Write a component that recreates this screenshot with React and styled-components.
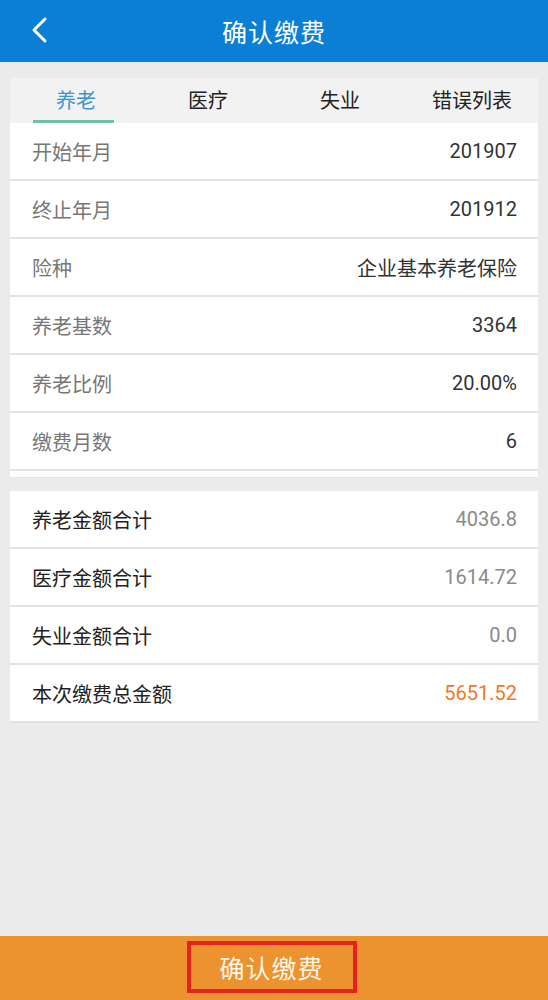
import styled, { createGlobalStyle } from 'styled-components'

const GlobalStyle = createGlobalStyle`
  html, body {
    margin: 0;
    padding: 0;
    background: #ebebeb;
    font-family: Roboto, "Noto Sans CJK SC", sans-serif;
  }
`;

const Page = styled.div`
  width: 548px;
  height: 1000px;
  display: flex;
  flex-direction: column;
  background: #ebebeb;
`;

const Header = styled.div`
  height: 62px;
  flex-shrink: 0;
  background: #0a7fd5;
  position: relative;
  display: flex;
  align-items: center;
  justify-content: center;
`;

const Title = styled.h1`
  margin: 0;
  color: #fff;
  font-size: 25px;
  font-weight: 400;
  letter-spacing: 1px;
`;

const Back = styled.div`
  position: absolute;
  left: 29px;
  top: 16px;
  width: 22px;
  height: 28px;
  display: flex;
`;

const Content = styled.div`
  flex: 1;
  padding: 16px 10px 0;
  display: flex;
  flex-direction: column;
`;

const Card = styled.div`
  background: #fff;
  margin-bottom: ${p => p.$gap || 0}px;
  padding-bottom: ${p => p.$tail || 0}px;
  border-bottom: ${p => p.$tail ? '1px solid #e4e4e4' : 'none'};
`;

const Tabs = styled.div`
  display: grid;
  grid-template-columns: repeat(4, 1fr);
  height: 45px;
  background: #f2f2f2;
`;

const Tab = styled.div`
  display: flex;
  align-items: center;
  justify-content: center;
  position: relative;
  font-size: 20px;
  color: ${p => p.$active ? '#3b95cb' : '#222'};
  padding-bottom: 3px;
  &::after {
    content: '';
    display: ${p => p.$active ? 'block' : 'none'};
    position: absolute;
    left: 23px;
    right: 28px;
    bottom: 0;
    height: 3px;
    background: #6cc2a4;
  }
`;

const Row = styled.div`
  display: flex;
  justify-content: space-between;
  align-items: center;
  height: 56px;
  padding: 0 21px 0 22px;
  border-bottom: 2px solid #e2e2e2;
  font-size: 20px;
`;

const Label = styled.span`
  color: ${p => p.$dark ? '#222' : '#777'};
`;

const Value = styled.span`
  color: ${p => p.$color || '#333'};
`;

const Footer = styled.div`
  height: 64px;
  flex-shrink: 0;
  background: #ec922f;
  display: flex;
  justify-content: center;
  padding-top: 5px;
  box-sizing: border-box;
`;

const SubmitButton = styled.button`
  width: 170px;
  height: 52px;
  margin-left: -5px;
  border: 4px solid #e42222;
  background: transparent;
  color: #fff6e6;
  font-family: inherit;
  font-size: 25px;
  letter-spacing: 1px;
  padding: 0;
`;

const details = [
  ['开始年月', '201907'],
  ['终止年月', '201912'],
  ['险种', '企业基本养老保险'],
  ['养老基数', '3364'],
  ['养老比例', '20.00%'],
  ['缴费月数', '6'],
];

const totals = [
  ['养老金额合计', '4036.8', '#8a8a8a'],
  ['医疗金额合计', '1614.72', '#8a8a8a'],
  ['失业金额合计', '0.0', '#8a8a8a'],
  ['本次缴费总金额', '5651.52', '#f07a23'],
];

const tabs = ['养老', '医疗', '失业', '错误列表'];

export default function App() {
  return (
    <Page>
      <GlobalStyle />
      <Header>
        <Back>
          <svg width="22" height="28" viewBox="0 0 22 28">
            <path d="M16 3 L5 14 L16 25" fill="none" stroke="#fff" strokeWidth="3" strokeLinecap="round" strokeLinejoin="round" />
          </svg>
        </Back>
        <Title>确认缴费</Title>
      </Header>
      <Content>
        <Card $gap={13} $tail={6}>
          <Tabs>
            {tabs.map((t, i) => (
              <Tab key={t} $active={i === 0}>{t}</Tab>
            ))}
          </Tabs>
          {details.map(([k, v]) => (
            <Row key={k}>
              <Label>{k}</Label>
              <Value>{v}</Value>
            </Row>
          ))}
        </Card>
        <Card>
          {totals.map(([k, v, c]) => (
            <Row key={k}>
              <Label $dark>{k}</Label>
              <Value $color={c}>{v}</Value>
            </Row>
          ))}
        </Card>
      </Content>
      <Footer>
        <SubmitButton>确认缴费</SubmitButton>
      </Footer>
    </Page>
  )
}
